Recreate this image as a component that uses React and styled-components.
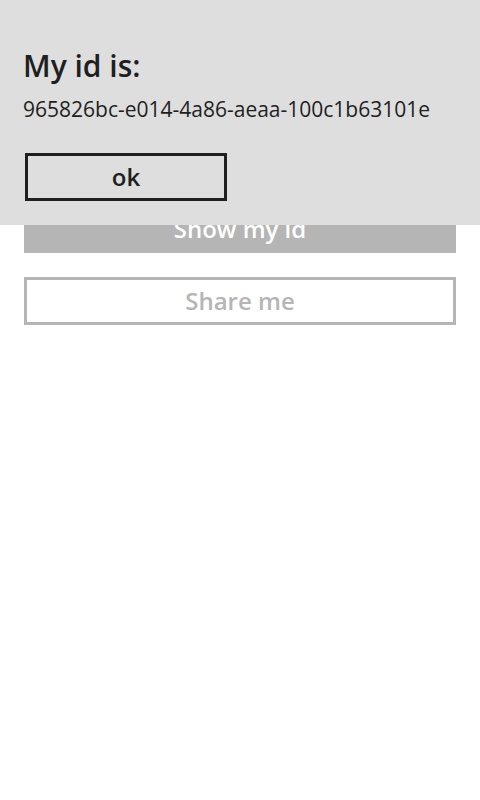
import React from "react";
import styled, { createGlobalStyle } from "styled-components";

const GlobalStyle = createGlobalStyle`
  html, body {
    margin: 0;
    padding: 0;
    background: #ffffff;
    font-family: "Open Sans", "Noto Sans", sans-serif;
  }
`;

const Page = styled.div`
  width: 480px;
  height: 800px;
  position: relative;
  overflow: hidden;
  background: #ffffff;
`;

const Content = styled.div`
  display: flex;
  flex-direction: column;
  gap: 24px;
  padding: 205px 24px 0 24px;
`;

const MainButton = styled.button`
  box-sizing: border-box;
  width: 100%;
  height: 48px;
  margin: 0;
  padding: 0;
  border: 3px solid #b5b5b5;
  background: ${props => (props.filled ? "#b5b5b5" : "#ffffff")};
  color: ${props => (props.filled ? "#ffffff" : "#b5b5b5")};
  font-family: "Open Sans", "Noto Sans", sans-serif;
  font-size: 24px;
  font-weight: 600;
  line-height: 1;
`;

const Dialog = styled.div`
  position: absolute;
  top: 0;
  left: 0;
  right: 0;
  height: 225px;
  box-sizing: border-box;
  background: #dedede;
  padding: 46px 23px 0 23px;
  display: flex;
  flex-direction: column;
`;

const Title = styled.h1`
  margin: 0;
  font-size: 30px;
  font-weight: 600;
  line-height: 40px;
  color: #1f1f1f;
`;

const Message = styled.p`
  margin: 9px 0 0 0;
  font-size: 21px;
  line-height: 28px;
  color: #1f1f1f;
`;

const DialogActions = styled.div`
  display: flex;
  margin-top: 30px;
  padding-left: 2px;
`;

const DialogButton = styled.button`
  box-sizing: border-box;
  width: 202px;
  height: 48px;
  margin: 0;
  padding: 0;
  border: 3px solid #1f1f1f;
  background: transparent;
  color: #1f1f1f;
  font-family: "Open Sans", "Noto Sans", sans-serif;
  font-size: 24px;
  font-weight: 600;
  line-height: 1;
`;

export default function App() {
  return (
    <Page>
      <GlobalStyle />
      <Content>
        <MainButton filled>Show my id</MainButton>
        <MainButton>Share me</MainButton>
      </Content>
      <Dialog>
        <Title>My id is:</Title>
        <Message>965826bc-e014-4a86-aeaa-100c1b63101e</Message>
        <DialogActions>
          <DialogButton>ok</DialogButton>
        </DialogActions>
      </Dialog>
    </Page>
  );
}
